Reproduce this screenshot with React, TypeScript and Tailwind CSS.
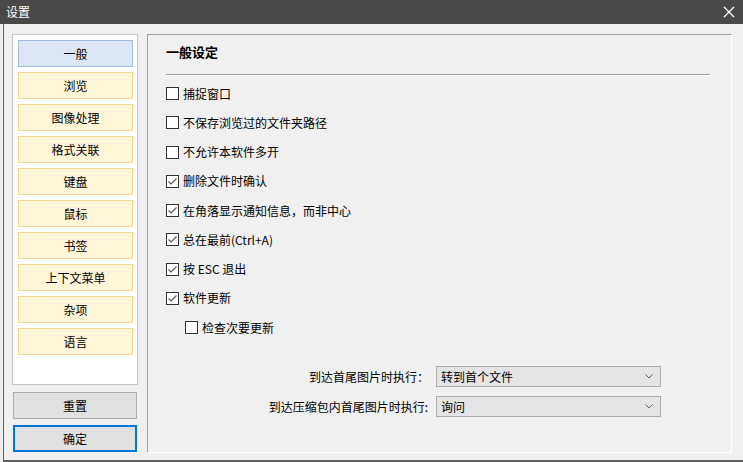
import React from "react";

const FONT = { fontFamily: '"Noto Sans CJK SC", "Noto Sans", sans-serif' };

function CheckBox({ checked }: { checked: boolean }) {
  return (
    <span className="w-[13px] h-[13px] border border-[#333333] bg-white flex items-center justify-center shrink-0">
      {checked && (
        <svg width="11" height="11" viewBox="0 0 11 11">
          <polyline points="1.5,5.5 4,8 9.5,2.5" fill="none" stroke="#555555" strokeWidth="1.1" />
        </svg>
      )}
    </span>
  );
}

function Row({ label, checked, indent }: { label: string; checked: boolean; indent?: boolean }) {
  return (
    <div className={`h-[29.25px] flex items-center gap-[4px] ${indent ? "pl-[19px]" : ""}`}>
      <CheckBox checked={checked} />
      <span className="text-[12px] leading-[16px] text-black whitespace-nowrap">{label}</span>
    </div>
  );
}

function Select({ value }: { value: string }) {
  return (
    <div className="w-[225px] h-[21px] border border-[#adadad] bg-[#e5e5e5] flex items-center justify-between pl-[4px] pr-[7px]">
      <span className="text-[12px] leading-[16px] text-black">{value}</span>
      <svg width="8" height="5" viewBox="0 0 8 5">
        <polyline points="0.5,0.5 4,4 7.5,0.5" fill="none" stroke="#606060" strokeWidth="1" />
      </svg>
    </div>
  );
}

export default function App() {
  const items = ["一般", "浏览", "图像处理", "格式关联", "键盘", "鼠标", "书签", "上下文菜单", "杂项", "语言"];
  const rows: { label: string; checked: boolean; indent?: boolean }[] = [
    { label: "捕捉窗口", checked: false },
    { label: "不保存浏览过的文件夹路径", checked: false },
    { label: "不允许本软件多开", checked: false },
    { label: "删除文件时确认", checked: true },
    { label: "在角落显示通知信息，而非中心", checked: true },
    { label: "总在最前(Ctrl+A)", checked: true },
    { label: "按 ESC 退出", checked: true },
    { label: "软件更新", checked: true },
    { label: "检查次要更新", checked: false, indent: true },
  ];
  return (
    <div style={FONT} className="w-[743px] h-[462px] bg-[#f0f0f0] overflow-hidden">
      <div className="h-[24px] bg-[#4a4846] flex items-center justify-between pl-[6px] pr-[8px]">
        <span className="text-[12px] leading-[16px] text-white">设置</span>
        <svg width="12" height="12" viewBox="0 0 12 12">
          <path d="M1 1 L11 11 M11 1 L1 11" stroke="#ffffff" strokeWidth="1.3" />
        </svg>
      </div>
      <div className="ml-[3px] h-[438px] border-l border-b-2 border-[#606060] flex pl-[8px] pt-[10px]">
        <div className="w-[126px] flex flex-col">
          <div className="h-[351px] border border-[#c4c4c4] bg-white pt-[5px] pl-[5px] flex flex-col gap-[5px]">
            {items.map((it, i) => (
              <div
                key={it}
                className={`w-[115px] h-[27px] flex items-center justify-center text-[12px] leading-[16px] text-black border ${
                  i === 0 ? "bg-[#dde6f4] border-[#9fbae4]" : "bg-[#fff6d8] border-[#fcd58e]"
                }`}
              >
                {it}
              </div>
            ))}
          </div>
          <div className="mt-[7px] mx-[1px] h-[27px] border border-[#adadad] bg-[#e1e1e1] flex items-center justify-center text-[12px] leading-[16px] text-black">
            重置
          </div>
          <div className="mt-[6px] mx-[1px] h-[27px] border-2 border-[#0078d7] bg-[#e1e1e1] flex items-center justify-center text-[12px] leading-[16px] text-black">
            确定
          </div>
        </div>
        <div className="ml-[9px] w-[585px] h-[419px] border-t border-l border-t-[#a0a0a0] border-l-[#a0a0a0] border-r border-b border-r-white border-b-white pl-[18px] pt-[7px]">
          <div className="h-[20px] flex items-center text-[13px] font-bold text-black">一般设定</div>
          <div className="mt-[12px] w-[544px] h-[2px] border-t border-t-[#a0a0a0] border-b border-b-white" />
          <div className="mt-[3px] flex flex-col">
            {rows.map((r) => (
              <Row key={r.label} label={r.label} checked={r.checked} indent={r.indent} />
            ))}
          </div>
          <div className="mt-[24px] flex flex-col gap-[9px]">
            <div className="flex items-center">
              <div className="w-[270px] text-right text-[12px] leading-[16px] text-black pr-[7px]">到达首尾图片时执行：</div>
              <Select value="转到首个文件" />
            </div>
            <div className="flex items-center">
              <div className="w-[270px] text-right text-[12px] leading-[16px] text-black pr-[8px]">到达压缩包内首尾图片时执行:</div>
              <Select value="询问" />
            </div>
          </div>
        </div>
      </div>
    </div>
  );
}
